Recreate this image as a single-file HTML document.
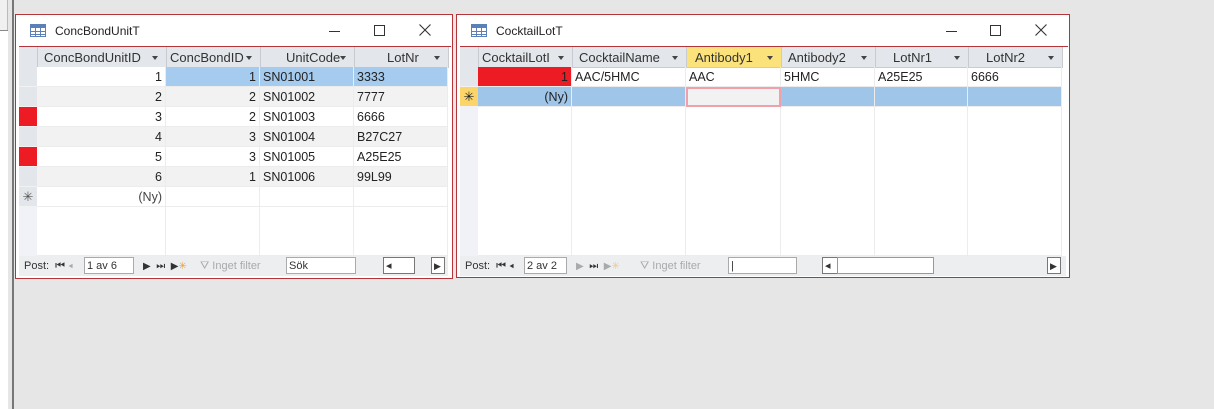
<!DOCTYPE html>
<html><head><meta charset="utf-8"><style>
*{box-sizing:border-box;margin:0;padding:0}
body{width:1214px;height:409px;background:#e6e6e6;font-family:"Liberation Sans",sans-serif;font-size:12px;color:#222;position:relative;overflow:hidden}
.a{position:absolute}
.win{position:absolute;background:#fff;border:1px solid #b5343a}
.title{position:absolute;font-size:12px;color:#222}
.h{position:absolute;top:32px;height:21px;background:#e3e6ea;border-right:1px solid #c8cbd0;border-bottom:1px solid #c8cbd0;font-size:13px;color:#333;padding-left:6px;line-height:21px;white-space:nowrap;overflow:hidden}
.h:after{content:"";position:absolute;right:8px;top:9px;border:3px solid transparent;border-top:4px solid #444}
.h.n:after{display:none}
.c{position:absolute;height:20px;border-right:1px solid #ececec;border-bottom:1px solid #ececec;font-size:12.5px;line-height:21px;padding:0 3px;white-space:nowrap}
.r{text-align:right}
.sel{position:absolute;width:18px;height:20px;background:#e3e6ea;border-bottom:1px solid #f2f2f2}
.nav{position:absolute;height:20px;background:#eceef0;font-size:11px;color:#333;line-height:21px}
.box{position:absolute;background:#fff;border:1px solid #aaa;height:17px;top:1px;font-size:11px;line-height:16px;padding-left:2px}
.grey{color:#aaa}
.x{position:absolute;top:8px;width:14px;height:14px}
</style></head><body>
<div class="a" style="left:0;top:0;width:8px;height:409px;background:#f0f0f0;border-right:1px solid #bbb"></div>
<div class="a" style="left:0;top:30px;width:8px;height:379px;background:#fff;border-top:1px solid #888"></div>
<div class="a" style="left:12px;top:0;width:2px;height:409px;background:#777"></div>

<div class="win" style="left:15px;top:14px;width:438px;height:265px">
 <svg class="a" style="left:14px;top:9px" width="16" height="14"><rect x="0.5" y="0.5" width="15" height="12" fill="#fff" stroke="#5b7fb8"/><rect x="1" y="1" width="14" height="3" fill="#5b7fb8"/><path d="M1 7.5H15M1 10.5H15M5.5 4V13M10.5 4V13" stroke="#5b7fb8"/></svg>
 <div class="title" style="left:39px;top:9px">ConcBondUnitT</div>
 <div class="a" style="left:313px;top:16px;width:11px;height:1px;background:#333"></div>
 <div class="a" style="left:358px;top:10px;width:11px;height:11px;border:1px solid #333"></div>
 <svg class="x" style="left:402px" viewBox="0 0 14 14"><path d="M1.5 1.5L12.5 12.5M12.5 1.5L1.5 12.5" stroke="#333" stroke-width="1.1"/></svg>
 <div class="a" style="left:3px;top:31px;width:432px;height:1px;background:#b5343a"></div>
 <div class="h n" style="left:3px;width:19px"></div>
 <div class="h" style="left:22px;width:129px;padding-left:6px">ConcBondUnitID</div>
 <div class="h" style="left:151px;width:94px;padding-left:3px">ConcBondID</div>
 <div class="h" style="left:245px;width:94px;padding-left:25px">UnitCode</div>
 <div class="h" style="left:339px;width:94px;padding-left:32px">LotNr</div>
</div>
<div class="sel" style="left:19px;top:67px"></div>
<div class="c r" style="left:37px;top:67px;width:129px;background:#fff">1</div>
<div class="c r" style="left:166px;top:67px;width:94px;background:#a5cbee">1</div>
<div class="c" style="left:260px;top:67px;width:94px;background:#a5cbee">SN01001</div>
<div class="c" style="left:354px;top:67px;width:94px;background:#a5cbee">3333</div>
<div class="sel" style="left:19px;top:87px"></div>
<div class="c r" style="left:37px;top:87px;width:129px;background:#f2f2f2">2</div>
<div class="c r" style="left:166px;top:87px;width:94px;background:#f2f2f2">2</div>
<div class="c" style="left:260px;top:87px;width:94px;background:#f2f2f2">SN01002</div>
<div class="c" style="left:354px;top:87px;width:94px;background:#f2f2f2">7777</div>
<div class="sel" style="left:19px;top:107px;background:#ed1c24"></div>
<div class="c r" style="left:37px;top:107px;width:129px">3</div>
<div class="c r" style="left:166px;top:107px;width:94px">2</div>
<div class="c" style="left:260px;top:107px;width:94px">SN01003</div>
<div class="c" style="left:354px;top:107px;width:94px">6666</div>
<div class="sel" style="left:19px;top:127px"></div>
<div class="c r" style="left:37px;top:127px;width:129px;background:#f2f2f2">4</div>
<div class="c r" style="left:166px;top:127px;width:94px;background:#f2f2f2">3</div>
<div class="c" style="left:260px;top:127px;width:94px;background:#f2f2f2">SN01004</div>
<div class="c" style="left:354px;top:127px;width:94px;background:#f2f2f2">B27C27</div>
<div class="sel" style="left:19px;top:147px;background:#ed1c24"></div>
<div class="c r" style="left:37px;top:147px;width:129px">5</div>
<div class="c r" style="left:166px;top:147px;width:94px">3</div>
<div class="c" style="left:260px;top:147px;width:94px">SN01005</div>
<div class="c" style="left:354px;top:147px;width:94px">A25E25</div>
<div class="sel" style="left:19px;top:167px"></div>
<div class="c r" style="left:37px;top:167px;width:129px;background:#f2f2f2">6</div>
<div class="c r" style="left:166px;top:167px;width:94px;background:#f2f2f2">1</div>
<div class="c" style="left:260px;top:167px;width:94px;background:#f2f2f2">SN01006</div>
<div class="c" style="left:354px;top:167px;width:94px;background:#f2f2f2">99L99</div>
<div class="sel" style="left:19px;top:187px;text-align:center;line-height:20px;color:#555;font-size:13px">✳</div>
<div class="c r" style="left:37px;top:187px;width:129px;color:#444">(Ny)</div>
<div class="c" style="left:166px;top:187px;width:94px"></div>
<div class="c" style="left:260px;top:187px;width:94px"></div>
<div class="c" style="left:354px;top:187px;width:94px"></div>
<div class="sel" style="left:19px;top:207px;height:49px;background:#f0f2f8"></div>
<div class="c" style="left:37px;top:207px;width:129px;height:49px"></div>
<div class="c" style="left:166px;top:207px;width:94px;height:49px"></div>
<div class="c" style="left:260px;top:207px;width:94px;height:49px"></div>
<div class="c" style="left:354px;top:207px;width:94px;height:49px"></div>
<div class="nav" style="left:19px;top:256px;width:429px">
 <span class="a" style="left:5px">Post:&nbsp; ⏮ <span class="grey">◂</span></span>
 <div class="box" style="left:65px;width:50px">1 av 6</div>
 <span class="a" style="left:124px;font-size:10px">▶ &nbsp;⏭ &nbsp;▶<span style="color:#e8a23a">✳</span></span>
 <span class="a grey" style="left:181px">⛛ Inget filter</span>
 <div class="box" style="left:267px;width:70px">Sök</div>
 <div class="box" style="left:364px;width:32px;border-color:#777">◂</div>
 <div class="box" style="left:412px;width:14px;border-color:#777;font-size:9px">▶</div>
</div>

<div class="win" style="left:456px;top:14px;width:614px;height:264px">
 <svg class="a" style="left:14px;top:9px" width="16" height="14"><rect x="0.5" y="0.5" width="15" height="12" fill="#fff" stroke="#5b7fb8"/><rect x="1" y="1" width="14" height="3" fill="#5b7fb8"/><path d="M1 7.5H15M1 10.5H15M5.5 4V13M10.5 4V13" stroke="#5b7fb8"/></svg>
 <div class="title" style="left:39px;top:9px">CocktailLotT</div>
 <div class="a" style="left:489px;top:16px;width:11px;height:1px;background:#333"></div>
 <div class="a" style="left:533px;top:10px;width:11px;height:11px;border:1px solid #333"></div>
 <svg class="x" style="left:577px" viewBox="0 0 14 14"><path d="M1.5 1.5L12.5 12.5M12.5 1.5L1.5 12.5" stroke="#333" stroke-width="1.1"/></svg>
 <div class="a" style="left:3px;top:31px;width:608px;height:1px;background:#b5343a"></div>
 <div class="h n" style="left:3px;width:19px"></div>
 <div class="h" style="left:22px;width:94px;padding-left:3px">CocktailLotI</div>
 <div class="h" style="left:116px;width:114px;padding-left:6px">CocktailName</div>
 <div class="h" style="left:230px;width:95px;padding-left:8px;background:#fbe27a">Antibody1</div>
 <div class="h" style="left:325px;width:94px;padding-left:6px">Antibody2</div>
 <div class="h" style="left:419px;width:93px;padding-left:17px">LotNr1</div>
 <div class="h" style="left:512px;width:94px;padding-left:17px">LotNr2</div>
</div>
<div class="sel" style="left:460px;top:67px"></div>
<div class="c r" style="left:478px;top:67px;width:94px;background:#ed1c24">1</div>
<div class="c" style="left:572px;top:67px;width:114px">AAC/5HMC</div>
<div class="c" style="left:686px;top:67px;width:95px">AAC</div>
<div class="c" style="left:781px;top:67px;width:94px">5HMC</div>
<div class="c" style="left:875px;top:67px;width:93px">A25E25</div>
<div class="c" style="left:968px;top:67px;width:94px">6666</div>
<div class="sel" style="left:460px;top:87px;background:#fbd56a;text-align:center;line-height:20px;font-size:13px">✳</div>
<div class="c r" style="left:478px;top:87px;width:94px;background:#9fc5e8">(Ny)</div>
<div class="c" style="left:572px;top:87px;width:114px;background:#9fc5e8"></div>
<div class="c" style="left:686px;top:87px;width:95px;background:#f2f2f2;border:2px solid #f0a0a8"></div>
<div class="c" style="left:781px;top:87px;width:94px;background:#9fc5e8"></div>
<div class="c" style="left:875px;top:87px;width:93px;background:#9fc5e8"></div>
<div class="c" style="left:968px;top:87px;width:94px;background:#9fc5e8"></div>
<div class="sel" style="left:460px;top:107px;height:149px;background:#f0f2f8"></div>
<div class="c" style="left:478px;top:107px;width:94px;height:149px"></div>
<div class="c" style="left:572px;top:107px;width:114px;height:149px"></div>
<div class="c" style="left:686px;top:107px;width:95px;height:149px"></div>
<div class="c" style="left:781px;top:107px;width:94px;height:149px"></div>
<div class="c" style="left:875px;top:107px;width:93px;height:149px"></div>
<div class="c" style="left:968px;top:107px;width:94px;height:149px"></div>
<div class="nav" style="left:460px;top:256px;width:606px">
 <span class="a" style="left:5px">Post:&nbsp; ⏮ ◂</span>
 <div class="box" style="left:64px;width:43px">2 av 2</div>
 <span class="a grey" style="left:116px;font-size:10px">▶ &nbsp;<span style="color:#333">⏭</span> &nbsp;▶<span style="color:#f0c890">✳</span></span>
 <span class="a grey" style="left:180px">⛛ Inget filter</span>
 <div class="box" style="left:268px;width:69px">|</div>
 <div class="box" style="left:362px;width:16px;border-color:#777">◂</div>
 <div class="box" style="left:377px;width:97px;border-color:#999"></div>
 <div class="box" style="left:587px;width:14px;border-color:#777;font-size:9px">▶</div>
</div>
</body></html>
